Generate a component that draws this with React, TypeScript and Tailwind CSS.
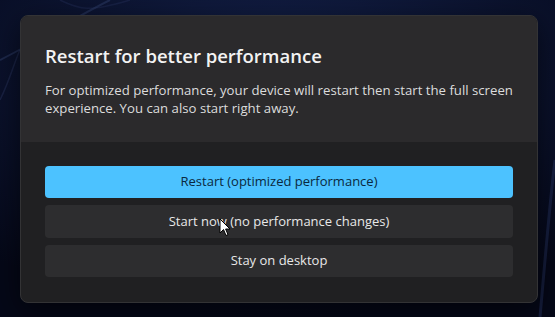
export default function App() {
  return (
    <div
      className="relative w-[555px] h-[317px] overflow-hidden bg-[#0a0e28]"
      style={{ fontFamily: '"Open Sans", "Noto Sans", sans-serif' }}
    >
      {/* faint wallpaper strokes */}
      <svg className="absolute inset-0" width="555" height="317" viewBox="0 0 555 317">
        <defs>
          <radialGradient id="g" cx="0.5" cy="0.2" r="0.8">
            <stop offset="0" stopColor="#13204a" />
            <stop offset="1" stopColor="#050818" />
          </radialGradient>
        </defs>
        <rect width="555" height="317" fill="url(#g)" />
        <path d="M0 60 C 40 40, 70 20, 110 0" stroke="#3a4a7a" strokeWidth="2" fill="none" opacity="0.4" />
        <path d="M0 100 C 10 80, 15 60, 20 50" stroke="#3a4a7a" strokeWidth="1.5" fill="none" opacity="0.3" />
        <path d="M60 0 C 80 10, 90 12, 130 0" stroke="#2e3d6a" strokeWidth="1.5" fill="none" opacity="0.3" />
        <path d="M540 317 C 545 260, 550 200, 555 160" stroke="#1f2b55" strokeWidth="3" fill="none" opacity="0.6" />
      </svg>

      <div className="absolute left-[20px] top-[15px] w-[518px] h-[288px] rounded-[8px] overflow-hidden border border-[#333335] bg-[#202022] flex flex-col shadow-[0_8px_30px_rgba(0,0,0,0.6)]">
        <div className="bg-[#2b2a2c] h-[126px] px-[24px] pt-[29px]">
          <h1 className="text-[18.5px] leading-[22px] font-semibold text-[#f3f3f3]">
            Restart for better performance
          </h1>
          <p className="mt-[14px] text-[13.2px] leading-[18px] text-[#dcdcdc]">
            For optimized performance, your device will restart then start the full screen experience. You can also start right away.
          </p>
        </div>
        <div className="flex flex-col gap-[7px] px-[24px] pt-[24px]">
          <button className="h-[32px] rounded-[4px] bg-[#4cc2ff] text-[13px] text-[#0a2940]">
            Restart (optimized performance)
          </button>
          <button className="h-[33px] rounded-[4px] bg-[#2d2d2f] text-[13px] text-[#e8e8e8]">
            Start now (no performance changes)
          </button>
          <button className="h-[32px] rounded-[4px] bg-[#2d2d2f] text-[13px] text-[#e8e8e8]">
            Stay on desktop
          </button>
        </div>
      </div>

      {/* mouse cursor */}
      <svg className="absolute left-[219px] top-[218px]" width="12" height="19" viewBox="0 0 12 19">
        <path d="M1 1 L1 15 L4.5 11.5 L7 17.5 L9 16.6 L6.6 11 L11 11 Z" fill="#ffffff" stroke="#000000" strokeWidth="1" />
      </svg>
    </div>
  );
}
